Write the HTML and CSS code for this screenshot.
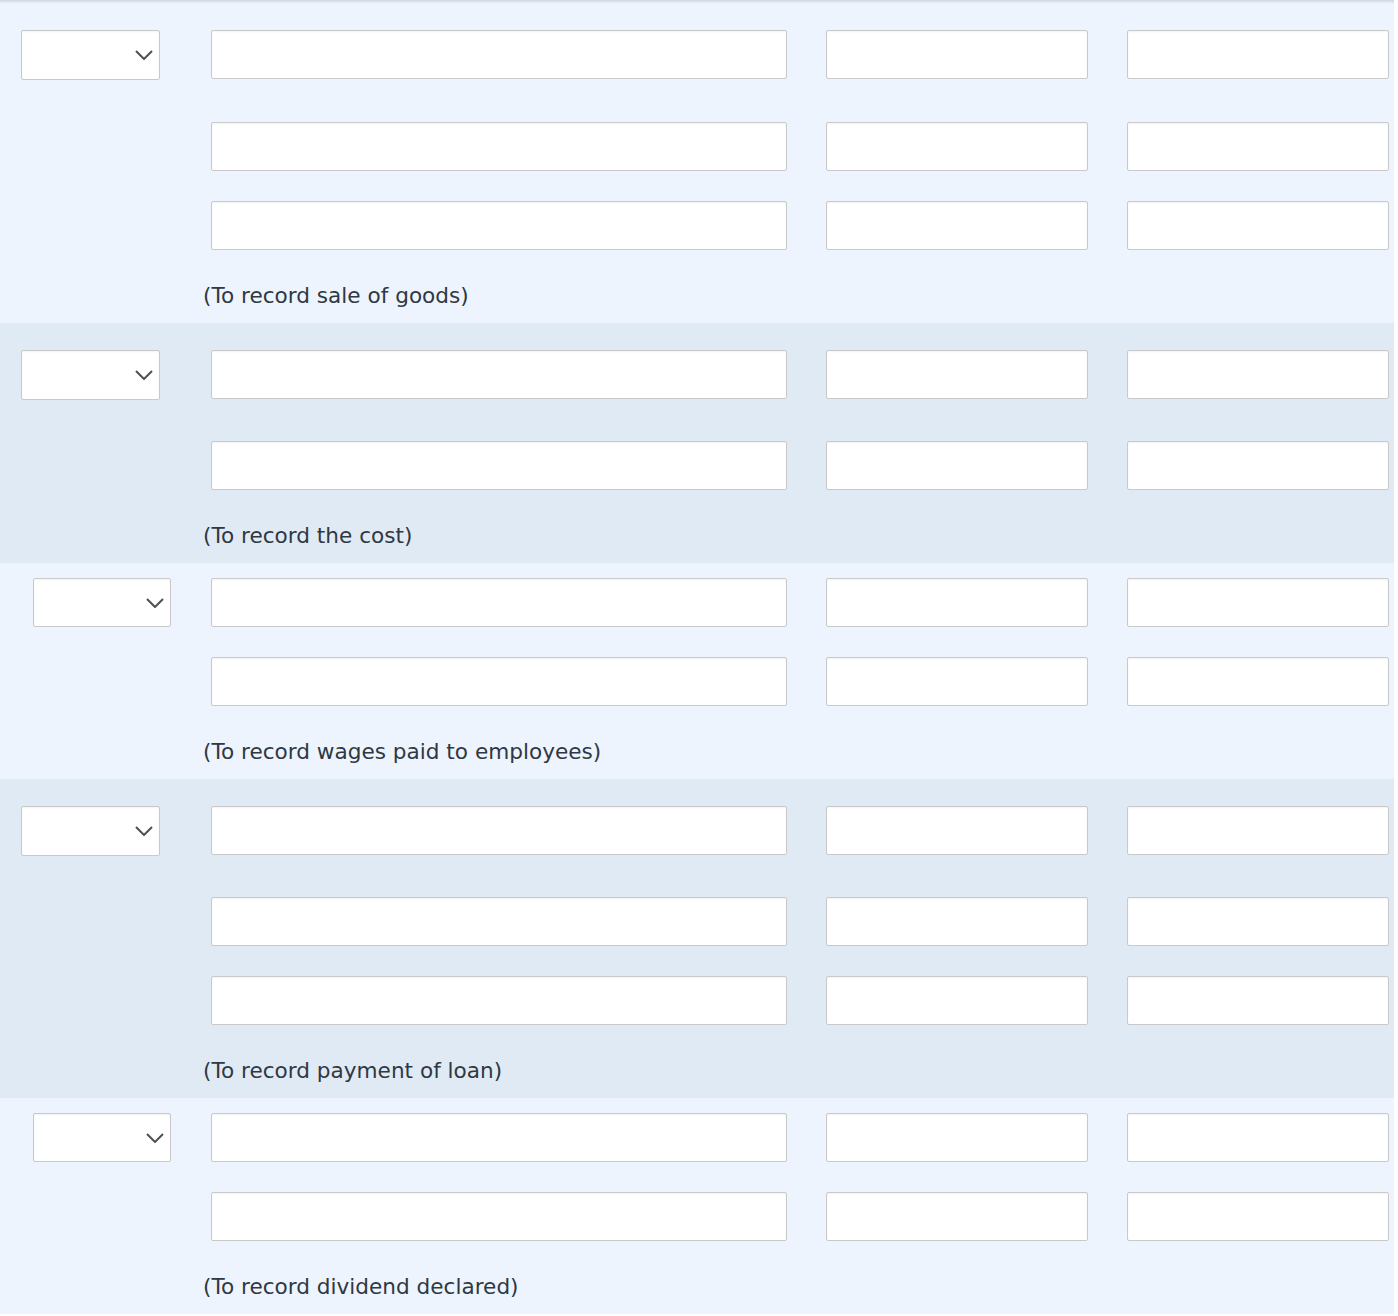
FILE: index.html
```html
<!DOCTYPE html>
<html lang="en">
<head>
<meta charset="utf-8">
<title>Journal entries</title>
<link rel="stylesheet" href="styles.css">
</head>
<body>
<div class="page">
  <div class="topshade"></div>

  <section class="entry light s1">
    <div class="row lead-a">
      <div class="sel-col"><div class="sel sel-a"><select aria-label="Date"><option></option></select><svg class="chev" width="18" height="10" viewBox="0 0 18 10"><path d="M1 1 L9 9 L17 1" fill="none" stroke="#505050" stroke-width="2"/></svg></div></div>
      <input class="acct" type="text"><input class="amt" type="text"><input class="amt" type="text">
    </div>
    <div class="row"><div class="sel-col"></div><input class="acct" type="text"><input class="amt" type="text"><input class="amt" type="text"></div>
    <div class="row"><div class="sel-col"></div><input class="acct" type="text"><input class="amt" type="text"><input class="amt" type="text"></div>
    <div class="label">(To record sale of goods)</div>
  </section>

  <section class="entry dark pad-a">
    <div class="row lead-a">
      <div class="sel-col"><div class="sel sel-a"><select aria-label="Date"><option></option></select><svg class="chev" width="18" height="10" viewBox="0 0 18 10"><path d="M1 1 L9 9 L17 1" fill="none" stroke="#505050" stroke-width="2"/></svg></div></div>
      <input class="acct" type="text"><input class="amt" type="text"><input class="amt" type="text">
    </div>
    <div class="row"><div class="sel-col"></div><input class="acct" type="text"><input class="amt" type="text"><input class="amt" type="text"></div>
    <div class="label">(To record the cost)</div>
  </section>

  <section class="entry light pad-b">
    <div class="row">
      <div class="sel-col"><div class="sel sel-b"><select aria-label="Date"><option></option></select><svg class="chev" width="18" height="10" viewBox="0 0 18 10"><path d="M1 1 L9 9 L17 1" fill="none" stroke="#505050" stroke-width="2"/></svg></div></div>
      <input class="acct" type="text"><input class="amt" type="text"><input class="amt" type="text">
    </div>
    <div class="row"><div class="sel-col"></div><input class="acct" type="text"><input class="amt" type="text"><input class="amt" type="text"></div>
    <div class="label">(To record wages paid to employees)</div>
  </section>

  <section class="entry dark pad-a">
    <div class="row lead-a">
      <div class="sel-col"><div class="sel sel-a"><select aria-label="Date"><option></option></select><svg class="chev" width="18" height="10" viewBox="0 0 18 10"><path d="M1 1 L9 9 L17 1" fill="none" stroke="#505050" stroke-width="2"/></svg></div></div>
      <input class="acct" type="text"><input class="amt" type="text"><input class="amt" type="text">
    </div>
    <div class="row"><div class="sel-col"></div><input class="acct" type="text"><input class="amt" type="text"><input class="amt" type="text"></div>
    <div class="row"><div class="sel-col"></div><input class="acct" type="text"><input class="amt" type="text"><input class="amt" type="text"></div>
    <div class="label">(To record payment of loan)</div>
  </section>

  <section class="entry light pad-b">
    <div class="row">
      <div class="sel-col"><div class="sel sel-b"><select aria-label="Date"><option></option></select><svg class="chev" width="18" height="10" viewBox="0 0 18 10"><path d="M1 1 L9 9 L17 1" fill="none" stroke="#505050" stroke-width="2"/></svg></div></div>
      <input class="acct" type="text"><input class="amt" type="text"><input class="amt" type="text">
    </div>
    <div class="row"><div class="sel-col"></div><input class="acct" type="text"><input class="amt" type="text"><input class="amt" type="text"></div>
    <div class="label">(To record dividend declared)</div>
  </section>
</div>
</body>
</html>
```

FILE: styles.css
```css
html, body {
  margin: 0;
  padding: 0;
  background: #ffffff;
}

.page {
  width: 1394px;
  font-family: "DejaVu Sans", Verdana, sans-serif;
  color: #2f3843;
}

.topshade {
  height: 3px;
  background: linear-gradient(#cdd6e2, #e6edf7);
}

.entry {
  display: flex;
  flex-direction: column;
}

.light { background: #edf4fd; }
.dark { background: #e0eaf5; }

.s1 { padding-top: 27px; }
.pad-a { padding-top: 27px; }
.pad-b { padding-top: 15px; }

.row {
  display: flex;
  align-items: flex-start;
  height: 49px;
  margin-bottom: 30px;
}

.row.lead-a { margin-bottom: 42px; }
.s1 .row.lead-a { margin-bottom: 43px; }

.row:nth-last-child(2) { margin-bottom: 0; }

.sel-col {
  width: 211px;
  flex: none;
  display: flex;
}

.sel {
  position: relative;
  height: 49px;
}

.sel-a { margin-left: 21px; width: 139px; height: 50px; }
.sel-b { margin-left: 33px; width: 138px; }

.sel select {
  appearance: none;
  -webkit-appearance: none;
  width: 100%;
  height: 100%;
  box-sizing: border-box;
  border: 1px solid #c9c9c9;
  border-radius: 2px;
  background: #ffffff;
  box-shadow: inset 0 1px 2px rgba(0, 0, 0, 0.05);
  margin: 0;
  padding: 0 30px 0 8px;
  font: inherit;
  outline: none;
}

.chev {
  position: absolute;
  right: 7px;
  top: 20px;
  pointer-events: none;
}

input {
  box-sizing: border-box;
  height: 49px;
  margin: 0;
  border: 1px solid #c9c9c9;
  border-radius: 2px;
  background: #ffffff;
  box-shadow: inset 0 1px 2px rgba(0, 0, 0, 0.05);
  padding: 0 8px;
  font: inherit;
  outline: none;
  flex: none;
}

.acct { width: 576px; }
.amt { width: 262px; margin-left: 39px; }

.label {
  height: 73px;
  box-sizing: border-box;
  padding: 32px 0 13px 203px;
  font-size: 21.6px;
  line-height: 28px;
  white-space: nowrap;
}
```
